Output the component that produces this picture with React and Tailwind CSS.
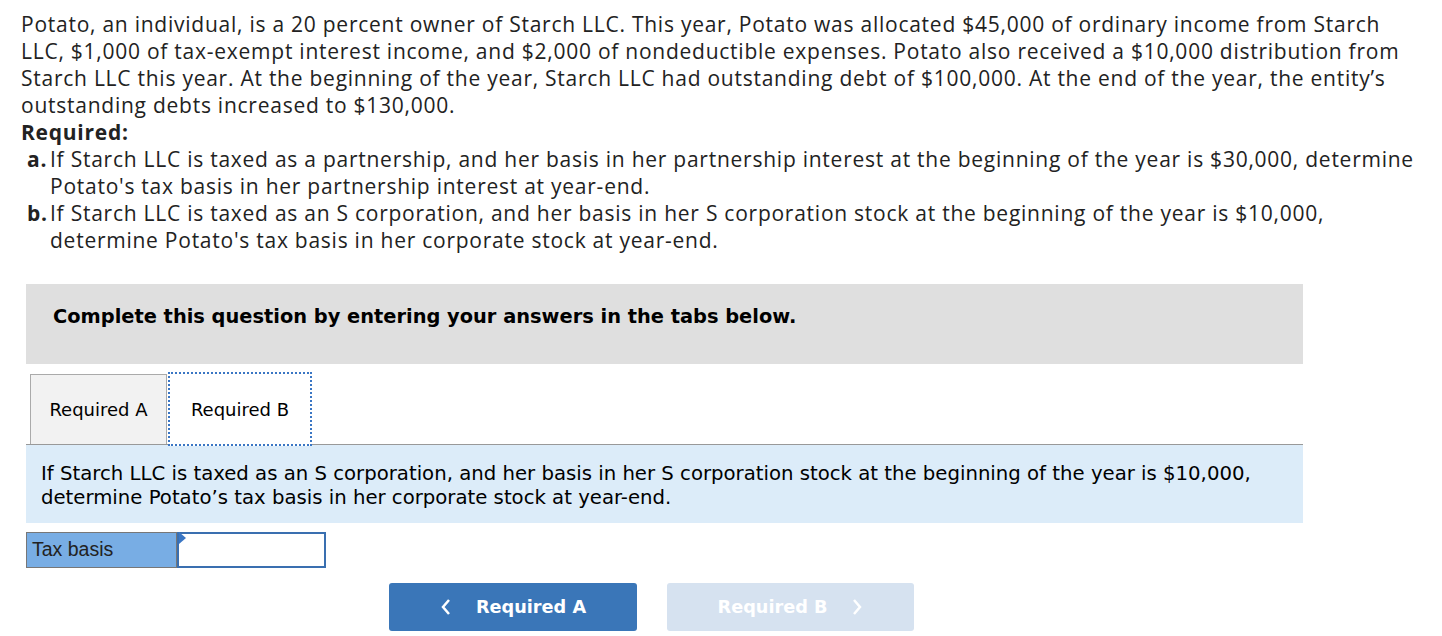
import React from 'react';

const Problem = () => (
  <div className="pl-[21px] pt-[11px] text-[21px] tracking-[0.75px] leading-[27px] text-[#222]" style={{ fontFamily: '"Open Sans", Lato, sans-serif' }}>
    <div className="whitespace-nowrap">Potato, an individual, is a 20 percent owner of Starch LLC. This year, Potato was allocated $45,000 of ordinary income from Starch</div>
    <div className="whitespace-nowrap">LLC, $1,000 of tax-exempt interest income, and $2,000 of nondeductible expenses. Potato also received a $10,000 distribution from</div>
    <div className="whitespace-nowrap">Starch LLC this year. At the beginning of the year, Starch LLC had outstanding debt of $100,000. At the end of the year, the entity’s</div>
    <div className="whitespace-nowrap">outstanding debts increased to $130,000.</div>
    <div className="font-bold">Required:</div>
    <div className="flex pl-[6px]">
      <span className="w-[23px] shrink-0 font-bold">a.</span>
      <div>
        <div className="whitespace-nowrap">If Starch LLC is taxed as a partnership, and her basis in her partnership interest at the beginning of the year is $30,000, determine</div>
        <div className="whitespace-nowrap">Potato's tax basis in her partnership interest at year-end.</div>
      </div>
    </div>
    <div className="flex pl-[6px]">
      <span className="w-[23px] shrink-0 font-bold">b.</span>
      <div>
        <div className="whitespace-nowrap">If Starch LLC is taxed as an S corporation, and her basis in her S corporation stock at the beginning of the year is $10,000,</div>
        <div className="whitespace-nowrap">determine Potato's tax basis in her corporate stock at year-end.</div>
      </div>
    </div>
  </div>
);

const Tabs = () => (
  <div className="flex items-end border-b border-[#999] pl-[4px] h-[81px]">
    <div className="h-[70px] w-[137px] bg-[#f2f2f2] border border-[#aaa] border-b-0 flex items-center justify-center text-[18px] text-black">
      Required A
    </div>
    <div className="h-[74px] w-[144px] -mb-[2px] ml-[1px] bg-white border-2 border-dotted border-[#3a76c4] flex items-center justify-center text-[18px] text-black">
      Required B
    </div>
  </div>
);

export default function App() {
  return (
    <div className="min-h-screen bg-white">
      <Problem />
      <div className="ml-[26px] w-[1277px] mt-[30px]" style={{ fontFamily: '"DejaVu Sans", Verdana, sans-serif' }}>
        <div className="h-[80px] bg-[#dfdfdf] flex items-center pl-[27px] pb-[14px] text-[19.4px] font-bold text-black">
          Complete this question by entering your answers in the tabs below.
        </div>
        <Tabs />
        <div className="bg-[#dcecf9] h-[78px] pl-[15px] pt-[17px] text-[19.7px] leading-[24px] text-black">
          <div className="whitespace-nowrap">If Starch LLC is taxed as an S corporation, and her basis in her S corporation stock at the beginning of the year is $10,000,</div>
          <div className="whitespace-nowrap">determine Potato’s tax basis in her corporate stock at year-end.</div>
        </div>
        <div className="mt-[9px] flex h-[36px] w-[300px]">
          <div className="w-[151px] bg-[#78ade4] border border-[#777] flex items-center pl-[5px] text-[19.5px] text-[#222]" style={{ fontFamily: '"Liberation Sans", Arial, sans-serif' }}>
            Tax basis
          </div>
          <div className="relative flex-1 border-2 border-[#3a6fb0] bg-white">
            <span className="absolute left-0 top-0 w-0 h-0 border-t-[6px] border-b-[6px] border-l-[7px] border-t-transparent border-b-transparent border-l-[#3a76c4] -translate-y-[2px]" />
          </div>
        </div>
        <div className="mt-[15px] flex gap-[30px] pl-[363px]" style={{ fontFamily: 'Tahoma, "DejaVu Sans", sans-serif' }}>
          <button className="h-[48px] w-[248px] rounded-[3px] bg-[#3a76b8] text-white font-bold text-[17.7px] flex items-center justify-center gap-[24px]">
            <svg width="12" height="18" viewBox="0 0 12 18" fill="none" stroke="white" strokeWidth="2.5"><path d="M9 2 L3 9 L9 16" /></svg>
            <span>Required A</span>
          </button>
          <button className="h-[48px] w-[247px] rounded-[3px] bg-[#d6e2f0] text-white font-bold text-[17.7px] flex items-center justify-center gap-[24px]">
            <span>Required B</span>
            <svg width="12" height="18" viewBox="0 0 12 18" fill="none" stroke="white" strokeWidth="2.5"><path d="M3 2 L9 9 L3 16" /></svg>
          </button>
        </div>
      </div>
    </div>
  );
}
